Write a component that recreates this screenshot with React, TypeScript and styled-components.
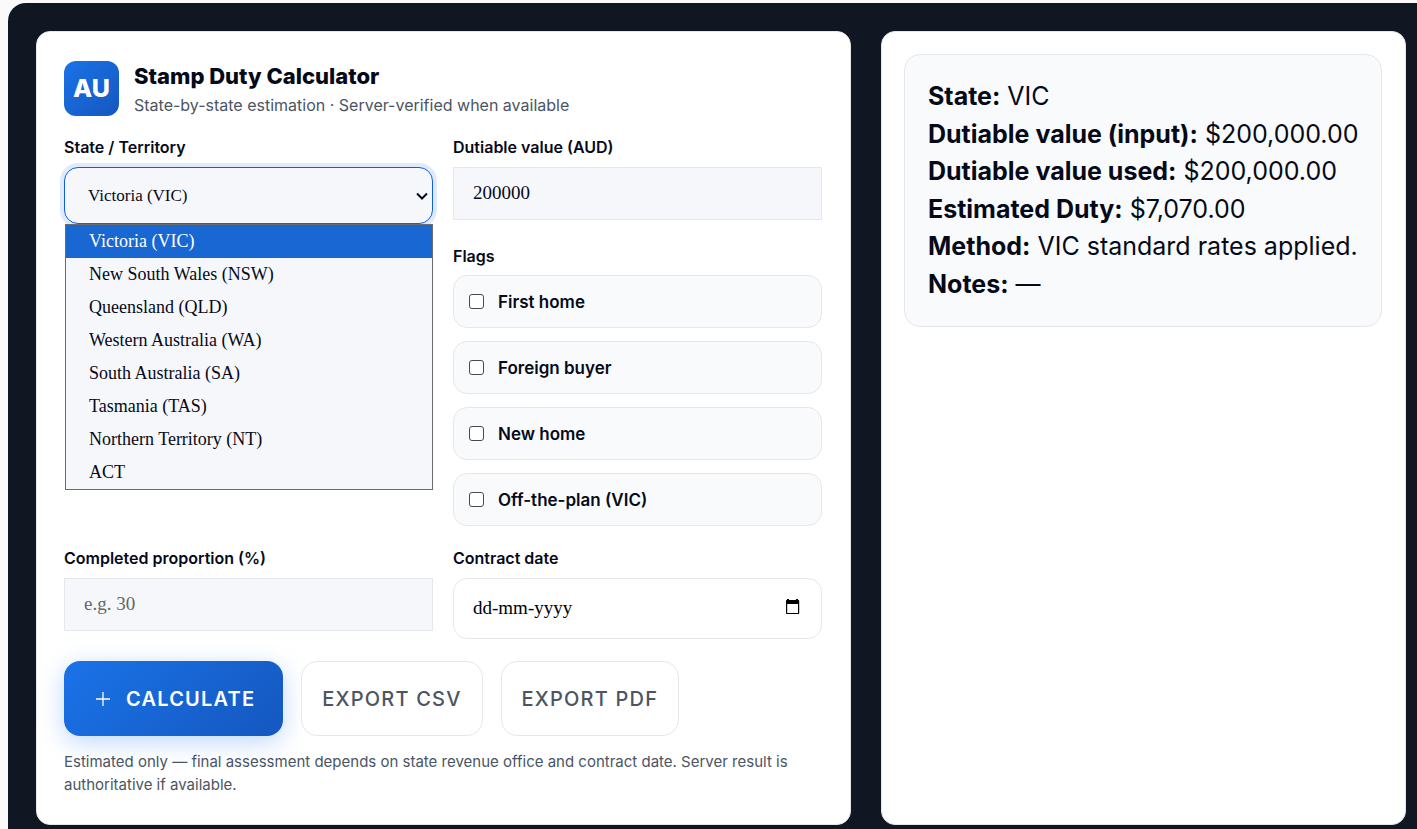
import React, { useState } from "react";
import styled, { createGlobalStyle, css } from "styled-components";

const sans = `Inter, "Liberation Sans", sans-serif`;
const serif = `"Liberation Serif", serif`;
const ink = "#060a18";
const muted = "#4b5563";
const line = "#e5e7eb";
const blueFill = "linear-gradient(135deg, #1a73e8, #1557bf)";

const GlobalStyle = createGlobalStyle`
  *, *::before, *::after { box-sizing: border-box; }
  body {
    margin: 0;
    padding: 3px 0 0 8px;
    background: #fafafa;
    color: ${ink};
    font-family: ${sans};
  }
`;

const Shell = styled.main`
  display: grid;
  grid-template-columns: minmax(0, 1fr) 525px;
  gap: 30px;
  min-height: calc(100vh - 3px);
  padding: 28px 11px 4px 28px;
  background: #101723;
  border-top-left-radius: 18px;
`;

const Card = styled.section<{ $compact?: boolean }>`
  padding: ${(p) => (p.$compact ? "22px 23px 22px 22px" : "27px 28px 27px 27px")};
  background: #fff;
  border: 1px solid ${line};
  border-radius: 14px;
`;

const Header = styled.header`
  display: flex;
  align-items: flex-start;
  gap: 15px;
  margin: 2px 0 17px;
`;

const Logo = styled.div`
  display: flex;
  align-items: center;
  justify-content: center;
  width: 55px;
  height: 55px;
  padding-bottom: 2px;
  border-radius: 12px;
  background: ${blueFill};
  color: #fff;
  font-size: 25px;
  font-weight: 800;
`;

const Title = styled.h1`
  margin: 0;
  font-size: 22px;
  line-height: 30px;
  font-weight: 800;
`;

const Subtitle = styled.p`
  margin: 0;
  color: ${muted};
  font-size: 16px;
  line-height: 28px;
  font-weight: 400;
`;

const Fields = styled.div`
  display: grid;
  grid-template-columns: repeat(2, minmax(0, 1fr));
  gap: 21px 20px;
`;

const Field = styled.div`
  min-width: 0;
`;

const labelText = css`
  display: block;
  padding: 0;
  font-size: 16px;
  line-height: 22px;
  font-weight: 600;
`;

const Label = styled.label`
  ${labelText}
  margin: 0 0 9px;
`;

const FlagGroup = styled.fieldset`
  grid-column: 2;
  min-width: 0;
  margin: 0;
  padding: 0;
  border: 0;
`;

const Legend = styled.legend`
  ${labelText}
  margin: 0 0 8px;
`;

const TextInput = styled.input`
  display: block;
  width: 100%;
  height: 53px;
  padding: 0 19px 2px;
  border: 1px solid ${line};
  border-radius: 0;
  background: #f6f7fb;
  color: ${ink};
  font-family: ${serif};
  font-size: 19px;
  outline: none;
  &::placeholder { color: #666; opacity: 1; }
`;

const SelectBox = styled.div`
  position: relative;
  svg {
    position: absolute;
    right: 5px;
    top: 22px;
    pointer-events: none;
  }
`;

const Select = styled.select`
  display: block;
  width: 100%;
  height: 57px;
  padding: 0 23px;
  appearance: none;
  border: 1px solid #0b5fe0;
  border-radius: 14px;
  background: #f6f7fb;
  box-shadow: 0 0 0 4px #dfeafc;
  color: ${ink};
  font-family: ${serif};
  font-size: 17px;
  outline: none;
`;

const OptionList = styled.ul`
  position: absolute;
  z-index: 2;
  top: 100%;
  left: 1px;
  right: 0;
  margin: 0;
  padding: 0;
  list-style: none;
  border: 1px solid #6b6b6b;
  background: #f6f7fb;
`;

const Option = styled.li<{ $active: boolean }>`
  padding: 0 23px;
  font-family: ${serif};
  font-size: 18px;
  line-height: 33px;
  background: ${(p) => (p.$active ? "#1967d2" : "transparent")};
  color: ${(p) => (p.$active ? "#fff" : ink)};
`;

const FlagList = styled.div`
  display: grid;
  gap: 13px;
`;

const Flag = styled.label`
  display: flex;
  align-items: center;
  gap: 14px;
  height: 53px;
  padding: 0 15px;
  border: 1px solid ${line};
  border-radius: 14px;
  background: #f9fafc;
  font-size: 17px;
  font-weight: 600;
`;

const Tick = styled.input`
  appearance: none;
  width: 15px;
  height: 15px;
  margin: 0;
  border: 1px solid #4a4a4a;
  border-radius: 3px;
  background: #fff;
  &:checked { background: #1967d2; }
`;

const DateBox = styled.div`
  display: flex;
  align-items: center;
  height: 61px;
  padding: 0 20px 0 0;
  border: 1px solid ${line};
  border-radius: 14px;
`;

const DateInput = styled(TextInput)`
  flex: 1;
  min-width: 0;
  border: 0;
  background: transparent;
  &::placeholder { color: #000; }
`;

const IconButton = styled.button`
  display: flex;
  padding: 0 0 4px;
  border: 0;
  background: none;
  color: #000;
`;

const Actions = styled.div`
  display: flex;
  flex-wrap: wrap;
  gap: 18px;
  margin: 22px 0 14px;
`;

const Button = styled.button<{ $primary?: boolean }>`
  display: flex;
  align-items: center;
  gap: 16px;
  height: 75px;
  padding: 0 20px;
  border: 1px solid ${line};
  border-radius: 16px;
  background: #fff;
  color: ${muted};
  font-family: ${sans};
  font-size: 20px;
  font-weight: 500;
  letter-spacing: 0.06em;
  text-transform: uppercase;
  ${(p) =>
    p.$primary &&
    css`
      padding: 0 28px 0 32px;
      border: 0;
      background: ${blueFill};
      box-shadow: 0 6px 24px rgba(26, 115, 232, 0.28);
      color: #fff;
      font-weight: 600;
    `}
`;

const Note = styled.p`
  margin: 0;
  color: ${muted};
  font-size: 15px;
  line-height: 23px;
  font-weight: 400;
`;

const Result = styled.dl`
  margin: 0;
  padding: 23px;
  border: 1px solid ${line};
  border-radius: 16px;
  background: #f9fafc;
  font-size: 25px;
  line-height: 1.5;
  div { white-space: nowrap; }
  dt { display: inline; font-weight: 700; }
  dd { display: inline; margin: 0; font-weight: 400; }
`;

const states = [
  "Victoria (VIC)",
  "New South Wales (NSW)",
  "Queensland (QLD)",
  "Western Australia (WA)",
  "South Australia (SA)",
  "Tasmania (TAS)",
  "Northern Territory (NT)",
  "ACT",
];

const flags = ["First home", "Foreign buyer", "New home", "Off-the-plan (VIC)"];

const results = [
  ["State:", "VIC"],
  ["Dutiable value (input):", "$200,000.00"],
  ["Dutiable value used:", "$200,000.00"],
  ["Estimated Duty:", "$7,070.00"],
  ["Method:", "VIC standard rates applied."],
  ["Notes:", "—"],
];

export default function App() {
  const [state, setState] = useState(states[0]);
  return (
    <>
      <GlobalStyle />
      <Shell>
        <Card>
          <Header>
            <Logo>AU</Logo>
            <div>
              <Title>Stamp Duty Calculator</Title>
              <Subtitle>State-by-state estimation · Server-verified when available</Subtitle>
            </div>
          </Header>
          <Fields>
            <Field>
              <Label htmlFor="state">State / Territory</Label>
              <SelectBox>
                <Select id="state" value={state} onChange={(e) => setState(e.target.value)}>
                  {states.map((s) => (
                    <option key={s}>{s}</option>
                  ))}
                </Select>
                <svg width="12" height="14" viewBox="0 0 12 14" fill="none" stroke={ink} strokeWidth="2">
                  <path d="M1 4.5 6 9.5 11 4.5" />
                </svg>
                <OptionList role="listbox" aria-label="State / Territory">
                  {states.map((s) => (
                    <Option key={s} role="option" aria-selected={s === state} $active={s === state} onClick={() => setState(s)}>
                      {s}
                    </Option>
                  ))}
                </OptionList>
              </SelectBox>
            </Field>
            <Field>
              <Label htmlFor="value">Dutiable value (AUD)</Label>
              <TextInput id="value" inputMode="decimal" defaultValue="200000" />
            </Field>
            <FlagGroup>
              <Legend>Flags</Legend>
              <FlagList>
                {flags.map((f) => (
                  <Flag key={f}>
                    <Tick type="checkbox" />
                    {f}
                  </Flag>
                ))}
              </FlagList>
            </FlagGroup>
            <Field>
              <Label htmlFor="completed">Completed proportion (%)</Label>
              <TextInput id="completed" inputMode="decimal" placeholder="e.g. 30" />
            </Field>
            <Field>
              <Label htmlFor="contract">Contract date</Label>
              <DateBox>
                <DateInput id="contract" placeholder="dd-mm-yyyy" />
                <IconButton type="button" aria-label="Choose date">
                  <svg width="16" height="16" viewBox="0 0 16 16" fill="currentColor">
                    <path d="M2 0h2v1h7V0h2v1h.4q.8 0 .8.8v12.400q0 .8-.8.8H1.800q-.8 0-.8-.8V1.800q0-.8.8-.8H2ZM2.200 5v8.900h10.800V5Z" fillRule="evenodd" />
                  </svg>
                </IconButton>
              </DateBox>
            </Field>
          </Fields>
          <Actions>
            <Button type="button" $primary>
              <svg width="14" height="14" viewBox="0 0 14 14" fill="none" stroke="currentColor" strokeWidth="1.3">
                <path d="M7 0V14M0 7H14" />
              </svg>
              Calculate
            </Button>
            <Button type="button">Export CSV</Button>
            <Button type="button">Export PDF</Button>
          </Actions>
          <Note>
            Estimated only — final assessment depends on state revenue office and contract date. Server result is
            authoritative if available.
          </Note>
        </Card>
        <Card $compact>
          <Result>
            {results.map(([name, value]) => (
              <div key={name}>
                <dt>{name}</dt> <dd>{value}</dd>
              </div>
            ))}
          </Result>
        </Card>
      </Shell>
    </>
  );
}
